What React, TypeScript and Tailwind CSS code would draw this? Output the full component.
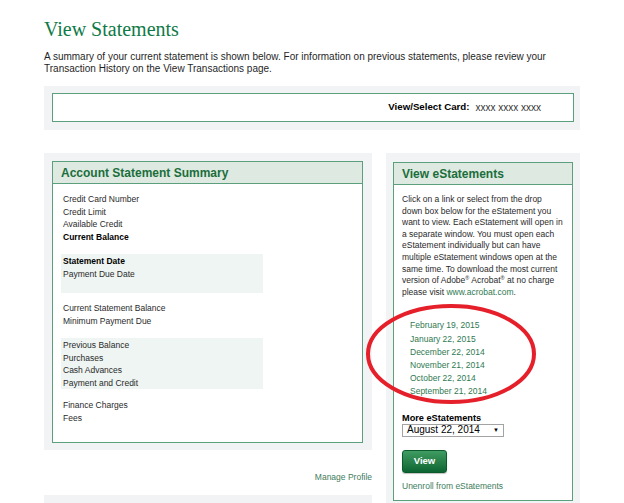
import React from 'react';

const sans = { fontFamily: '"Liberation Sans", Arial, sans-serif' };

const estatements = [
  'February 19, 2015',
  'January 22, 2015',
  'December 22, 2014',
  'November 21, 2014',
  'October 22, 2014',
  'September 21, 2014',
];

function PanelHeader({ title }: { title: string }) {
  return (
    <div className="h-[22px] flex items-center pl-[8px] bg-[#dde9e1] border-b border-[#5c9f7c]">
      <span className="text-[12px] font-bold text-[#1b6e3c] leading-none">{title}</span>
    </div>
  );
}

function SummaryCard() {
  return (
    <div className="bg-[#f2f3f4] pt-[8px] pb-[7px] pl-[8px] pr-[9px]">
      <div className="border border-[#5c9f7c] bg-white">
        <PanelHeader title="Account Statement Summary" />
        <div className="pt-[9px] pb-[18px] pl-[8px] text-[8.5px] leading-[12.5px] text-[#2a2a2a]">
          <div className="pl-[2px]">
            <div>Credit Card Number</div>
            <div>Credit Limit</div>
            <div>Available Credit</div>
            <div className="font-bold text-black">Current Balance</div>
          </div>
          <div className="mt-[11px] w-[202px] h-[39px] pl-[2px] pt-[1px] bg-[#eef5f2]">
            <div className="font-bold text-black">Statement Date</div>
            <div>Payment Due Date</div>
          </div>
          <div className="mt-[9px] pl-[2px]">
            <div>Current Statement Balance</div>
            <div>Minimum Payment Due</div>
          </div>
          <div className="mt-[11px] w-[202px] h-[51px] pl-[2px] pt-[1px] bg-[#eef5f2]">
            <div>Previous Balance</div>
            <div>Purchases</div>
            <div>Cash Advances</div>
            <div>Payment and Credit</div>
          </div>
          <div className="mt-[10px] pl-[2px]">
            <div>Finance Charges</div>
            <div>Fees</div>
          </div>
        </div>
      </div>
    </div>
  );
}

function EStatementsCard() {
  return (
    <div className="bg-[#f2f3f4] pt-[9px] px-[7px] h-full">
      <div className="border border-[#5c9f7c] bg-white h-[339px]">
        <PanelHeader title="View eStatements" />
        <div className="pt-[9px] pl-[8px] text-[8.5px] text-[#2a2a2a]">
          <p className="leading-[11.6px] whitespace-nowrap">
            Click on a link or select from the drop
            <br />
            down box below for the eStatement you
            <br />
            want to view. Each eStatement will open in
            <br />
            a separate window. You must open each
            <br />
            eStatement individually but can have
            <br />
            multiple eStatement windows open at the
            <br />
            same time. To download the most current
            <br />
            version of Adobe<sup className="text-[5.5px]">®</sup> Acrobat<sup className="text-[5.5px]">®</sup> at no charge
            <br />
            please visit <span className="text-[#2f7a52]">www.acrobat.com</span>.
          </p>

          <ul className="mt-[21px] pl-[8px] leading-[13.2px] text-[#2f7a52]">
            {estatements.map((d) => (
              <li key={d}>{d}</li>
            ))}
          </ul>

          <div className="mt-[14px] text-[9.2px] font-bold text-black leading-[11px]">More eStatements</div>
          <div className="w-[102px] h-[13px] border border-[#a3a3a3] flex items-center justify-between pl-[4px] pr-[4px] bg-white">
            <span className="text-[10px] leading-none text-black">August 22, 2014</span>
            <span className="text-[6px] leading-none text-black">▼</span>
          </div>

          <button className="mt-[13px] w-[45px] h-[23px] rounded-[3px] border border-[#0a5a2c] bg-gradient-to-b from-[#3f9c62] to-[#0b6532] text-white text-[9.5px] font-bold shadow-[0_1px_1px_rgba(0,0,0,0.25)]">
            View
          </button>

          <div className="mt-[7px] text-[#3e7d5d] leading-[12px]">Unenroll from eStatements</div>
        </div>
      </div>
    </div>
  );
}

export default function App() {
  return (
    <div className="relative w-[624px] h-[503px] overflow-hidden bg-white" style={sans}>
      <div className="pl-[44px] w-[580px]">
        <h1
          className="mt-[17px] text-[20px] leading-[24px] text-[#0f7a47]"
          style={{ fontFamily: '"Liberation Serif", "Times New Roman", serif' }}
        >
          View Statements
        </h1>
        <p className="mt-[10px] text-[10px] leading-[12px] text-[#1f1f1f]">
          A summary of your current statement is shown below. For information on previous statements, please review your
          <br />
          Transaction History on the View Transactions page.
        </p>

        {/* card picker */}
        <div className="mt-[11px] bg-[#f2f3f4] pt-[7px] pb-[8px] pl-[8px] pr-[6px]">
          <div className="h-[29px] border border-[#5c9f7c] bg-white flex items-center justify-end pr-[32px] gap-[6px]">
            <span className="text-[9.7px] font-bold text-black">View/Select Card:</span>
            <span className="text-[10px] text-[#333]">xxxx xxxx xxxx</span>
          </div>
        </div>

        <div className="mt-[23px] flex gap-[14px] h-[360px]">
          <div className="w-[328px] flex flex-col">
            <SummaryCard />
            <div className="mt-[21px] text-right text-[8.5px] leading-[12px] text-[#3e7d5d]">Manage Profile</div>
            <div className="mt-[12px] flex-1 bg-[#f2f3f4]" />
          </div>
          <div className="w-[194px]">
            <EStatementsCard />
          </div>
        </div>
      </div>

      {/* annotation ring */}
      <svg className="absolute left-[364px] top-[302px]" width="176" height="104" viewBox="0 0 176 104">
        <ellipse cx="87" cy="52" rx="83" ry="48" fill="none" stroke="#e5202b" strokeWidth="4" />
      </svg>
    </div>
  );
}
